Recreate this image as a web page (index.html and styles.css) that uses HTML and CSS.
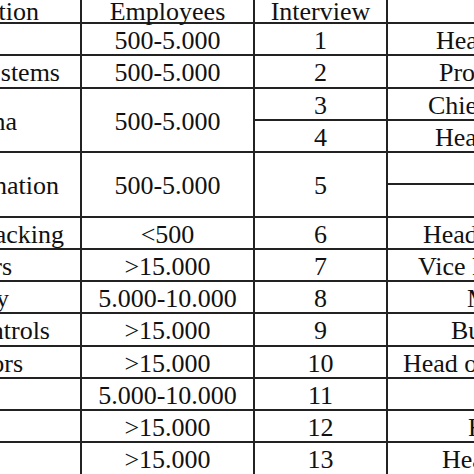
FILE: index.html
```html
<!DOCTYPE html>
<html>
<head>
<meta charset="utf-8">
<link rel="stylesheet" href="styles.css">
</head>
<body>
<div class="frame">
<table class="grid">
  <colgroup>
    <col class="c-org">
    <col class="c-emp">
    <col class="c-int">
    <col class="c-pos">
  </colgroup>
  <tr class="head">
    <td class="org"><span class="frag p41">tion</span></td>
    <td>Employees</td>
    <td>Interview</td>
    <td class="pos"></td>
  </tr>
  <tr>
    <td class="org"></td>
    <td>500-5.000</td>
    <td>1</td>
    <td class="pos"><span class="l435">Head</span></td>
  </tr>
  <tr>
    <td class="org"><span class="frag p20">stems</span></td>
    <td>500-5.000</td>
    <td>2</td>
    <td class="pos"><span class="l438">Prod</span></td>
  </tr>
  <tr>
    <td class="org" rowspan="2"><span class="frag p63">na</span></td>
    <td rowspan="2">500-5.000</td>
    <td>3</td>
    <td class="pos"><span class="l427">Chief</span></td>
  </tr>
  <tr>
    <td>4</td>
    <td class="pos"><span class="l434">Head</span></td>
  </tr>
  <tr>
    <td class="org" rowspan="2"><span class="frag p21">nation</span></td>
    <td rowspan="2">500-5.000</td>
    <td rowspan="2">5</td>
    <td class="pos"></td>
  </tr>
  <tr>
    <td class="pos"></td>
  </tr>
  <tr>
    <td class="org"><span class="frag p16">acking</span></td>
    <td>&lt;500</td>
    <td>6</td>
    <td class="pos"><span class="l422">Head</span></td>
  </tr>
  <tr>
    <td class="org"><span class="frag p68">rs</span></td>
    <td>&gt;15.000</td>
    <td>7</td>
    <td class="pos"><span class="l417">Vice P</span></td>
  </tr>
  <tr>
    <td class="org"><span class="frag p71">y</span></td>
    <td>5.000-10.000</td>
    <td>8</td>
    <td class="pos"><span class="l466">Ma</span></td>
  </tr>
  <tr>
    <td class="org"><span class="frag p30">ntrols</span></td>
    <td>&gt;15.000</td>
    <td>9</td>
    <td class="pos"><span class="l450">Bus</span></td>
  </tr>
  <tr>
    <td class="org"><span class="frag p57">ors</span></td>
    <td>&gt;15.000</td>
    <td>10</td>
    <td class="pos"><span class="l402">Head of</span></td>
  </tr>
  <tr>
    <td class="org"></td>
    <td>5.000-10.000</td>
    <td>11</td>
    <td class="pos"></td>
  </tr>
  <tr>
    <td class="org"></td>
    <td>&gt;15.000</td>
    <td>12</td>
    <td class="pos"><span class="l467">Fi</span></td>
  </tr>
  <tr>
    <td class="org"></td>
    <td>&gt;15.000</td>
    <td>13</td>
    <td class="pos"><span class="l441">Hea</span></td>
  </tr>
</table>
</div>
</body>
</html>
```

FILE: styles.css
```css
html, body {
  margin: 0;
  padding: 0;
  overflow: hidden;
  background: #ffffff;
}

.frame {
  width: 474px;
  height: 474px;
  overflow: hidden;
  position: relative;
  background: #ffffff;
}

.grid {
  border-collapse: collapse;
  table-layout: fixed;
  width: 547px;
  margin-left: -40px;
  margin-top: -10px;
  font-family: "Liberation Serif", "Times New Roman", serif;
  font-size: 26px;
  color: #111111;
}

.c-org { width: 121px; }
.c-emp { width: 173px; }
.c-int { width: 133px; }
.c-pos { width: 120px; }

.grid td {
  border: 2px solid #222222;
  height: 24px;
  padding: 4px 0 0 0;
  text-align: center;
  vertical-align: middle;
  white-space: nowrap;
  line-height: 26px;
  overflow: visible;
}

.grid tr {
  height: 32.25px;
}

.grid tr.head {
  height: 30px;
}

.grid tr.head td {
  padding-top: 10px;
  line-height: 20px;
  height: 18px;
}

.grid td.org {
  border-left: none;
  text-align: right;
}

.grid td.pos {
  border-right: none;
  text-align: left;
  position: relative;
}

.frag { display: inline-block; }
.p41 { margin-right: 41px; }
.p20 { margin-right: 20px; }
.p63 { margin-right: 63px; }
.p21 { margin-right: 21px; }
.p16 { margin-right: 16px; }
.p68 { margin-right: 68px; }
.p71 { margin-right: 71px; }
.p30 { margin-right: 30px; }
.p57 { margin-right: 57px; }

.pos span { display: inline-block; }
.l435 { margin-left: 48px; }
.l438 { margin-left: 51px; }
.l427 { margin-left: 40px; }
.l434 { margin-left: 47px; }
.l422 { margin-left: 35px; }
.l417 { margin-left: 30px; }
.l466 { margin-left: 79px; }
.l450 { margin-left: 63px; }
.l402 { margin-left: 15px; }
.l467 { margin-left: 80px; }
.l441 { margin-left: 54px; }
```
